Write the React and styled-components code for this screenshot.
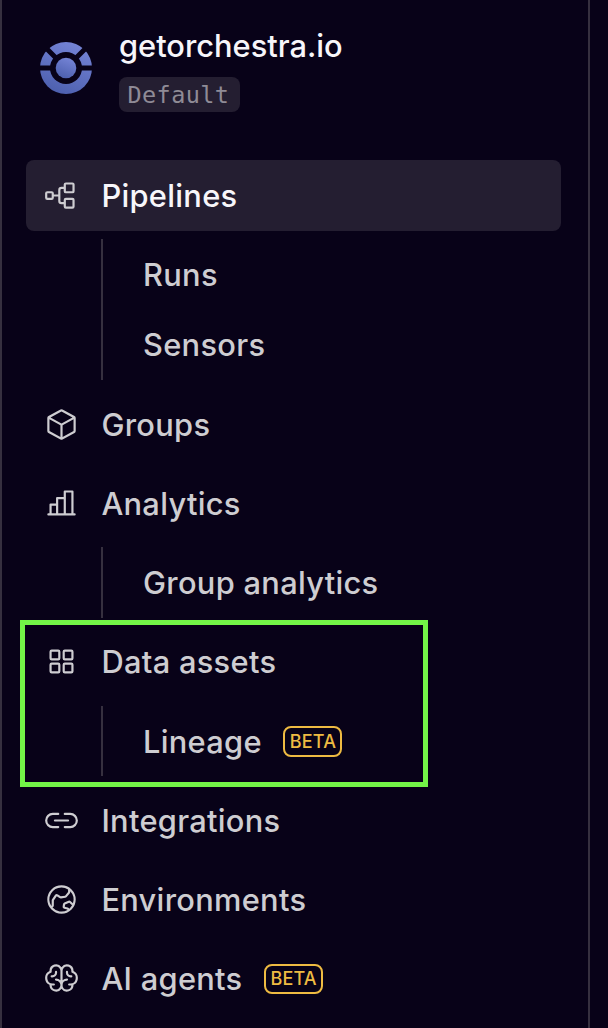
import React from "react";
import styled, { createGlobalStyle } from "styled-components";
import {
  PiTreeStructure,
  PiCube,
  PiChartBar,
  PiSquaresFour,
  PiLinkSimpleHorizontal,
  PiGlobeHemisphereEast,
  PiBrain,
} from "react-icons/pi";

const App = () => {
  return (
    <Page>
      <GlobalStyle />
      <Sidebar>
        <Header>
          <Logo />
          <Account>
            <AccountName>getorchestra.io</AccountName>
            <Workspace>Default</Workspace>
          </Account>
        </Header>
        <Nav>
          <NavItem $active>
            <PiTreeStructure />
            <Label>Pipelines</Label>
          </NavItem>
          <SubMenu>
            <SubItem>Runs</SubItem>
            <SubItem>Sensors</SubItem>
          </SubMenu>
          <NavItem>
            <PiCube />
            <Label>Groups</Label>
          </NavItem>
          <NavItem>
            <PiChartBar />
            <Label>Analytics</Label>
          </NavItem>
          <SubMenu>
            <SubItem>Group analytics</SubItem>
          </SubMenu>
          <NavItem>
            <PiSquaresFour />
            <Label>Data assets</Label>
            <Highlight />
          </NavItem>
          <SubMenu>
            <SubItem>
              Lineage
              <Badge>BETA</Badge>
            </SubItem>
          </SubMenu>
          <NavItem>
            <PiLinkSimpleHorizontal />
            <Label>Integrations</Label>
          </NavItem>
          <NavItem>
            <PiGlobeHemisphereEast />
            <Label>Environments</Label>
          </NavItem>
          <NavItem>
            <PiBrain />
            <Label>AI agents</Label>
            <Badge>BETA</Badge>
          </NavItem>
        </Nav>
      </Sidebar>
    </Page>
  );
};

const Logo = () => (
  <LogoSvg viewBox="0 0 52 52">
    <defs>
      <linearGradient id="logoFill" x1="0.7" y1="0" x2="0.3" y2="1">
        <stop offset="0" stopColor="#7584d6" />
        <stop offset="1" stopColor="#4c5fae" />
      </linearGradient>
      <mask id="logoCuts">
        <rect width="52" height="52" fill="#fff" />
        <circle cx="26" cy="26" r="16" fill="#000" />
        <path d="M0 26H52M26 26L5 5M26 26L47 5" stroke="#000" strokeWidth="5" />
      </mask>
    </defs>
    <circle cx="26" cy="26" r="26" fill="url(#logoFill)" mask="url(#logoCuts)" />
    <circle cx="26" cy="26" r="10.3" fill="url(#logoFill)" />
  </LogoSvg>
);

export default App;

const GlobalStyle = createGlobalStyle`
  * {
    box-sizing: border-box;
  }

  body {
    margin: 0;
    background: #080218;
    overflow: hidden;
  }
`;

const Page = styled.div`
  height: 1028px;
  background: #080218;
  font-family: Inter, "Liberation Sans", sans-serif;
  font-weight: 450;
`;

const Sidebar = styled.aside`
  width: 590px;
  height: 100%;
  padding: 26px 27px 0 24px;
  border-left: 2px solid #36303f;
  border-right: 2px solid #36303f;
  overflow: hidden;
`;

const Header = styled.div`
  display: flex;
  height: 134px;
  padding-left: 14px;
`;

const LogoSvg = styled.svg`
  width: 52px;
  height: 52px;
  margin-top: 16px;
`;

const Account = styled.div`
  display: flex;
  flex-direction: column;
  align-items: flex-start;
  margin-left: 27px;
`;

const AccountName = styled.div`
  height: 40px;
  line-height: 40px;
  font-size: 30.8px;
  color: #f7f6fa;
`;

const Workspace = styled.div`
  width: 121px;
  height: 35px;
  margin-top: 11px;
  padding-left: 8.5px;
  border-radius: 8px;
  background: #241e31;
  color: #8f8b96;
  font-family: "DejaVu Sans Mono", monospace;
  font-size: 23.5px;
  font-weight: 400;
  letter-spacing: 0.4px;
  line-height: 37px;
`;

const Nav = styled.nav`
  display: flex;
  flex-direction: column;
  gap: 8.7px;
`;

const NavItem = styled.div`
  position: relative;
  display: flex;
  align-items: center;
  height: 70.6px;
  padding-left: 18px;
  border-radius: 8px;
  background: ${({ $active }) => ($active ? "#241e31" : "transparent")};
  color: ${({ $active }) => ($active ? "#f7f6fa" : "#cecdd1")};
  font-size: 30.8px;

  > svg {
    width: 35px;
    height: 35px;
    color: #cecdd1;
  }
`;

const Label = styled.span`
  margin-left: 22.4px;
  letter-spacing: 0.3px;
`;

const SubMenu = styled.div`
  margin-left: 75px;
  padding-top: 0.4px;
  border-left: 2px solid #36303f;
`;

const SubItem = styled.div`
  display: flex;
  align-items: center;
  height: 70.2px;
  padding-left: 40px;
  color: #cecdd1;
  font-size: 30.8px;
  letter-spacing: 0.3px;
`;

const Badge = styled.span`
  display: flex;
  align-items: center;
  justify-content: center;
  width: 59px;
  height: 30.5px;
  margin-left: 21.6px;
  border: 2px solid #eebb42;
  border-radius: 8px;
  color: #eebb42;
  font-size: 18px;
  letter-spacing: 0.2px;
`;

/* frame laid over the data assets section */
const Highlight = styled.div`
  position: absolute;
  top: -6.4px;
  left: -6px;
  width: 408px;
  height: 167px;
  border: 5px solid #73f547;
  pointer-events: none;
`;
